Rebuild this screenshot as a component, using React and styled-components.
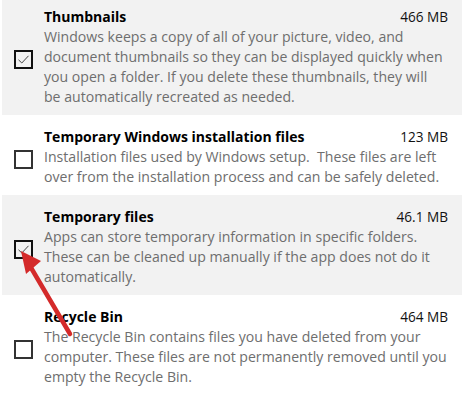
import React from "react";
import styled, { createGlobalStyle } from "styled-components";

const Global = createGlobalStyle`
  html, body { margin: 0; padding: 0; background: #ffffff; }
  body { font-family: "Open Sans", "Noto Sans", sans-serif; overflow: hidden; }
`;

const Page = styled.div`
  position: relative;
  width: 470px;
  height: 395px;
  overflow: hidden;
`;

const List = styled.div`
  margin-top: -5px;
  margin-left: 2px;
  width: 460px;
  display: flex;
  flex-direction: column;
`;

const Row = styled.div`
  display: flex;
  align-items: center;
  background: ${(p) => (p.$shaded ? "#f2f2f2" : "#ffffff")};
  padding: 12px 14px 8px 12px;
`;

const Box = styled.div`
  flex: none;
  width: 15px;
  height: 15px;
  border: 2px solid ${(p) => (p.$checked ? "#111" : "#333")};
  margin-right: 11px;
  margin-top: 4px;
  display: flex;
  align-items: center;
  justify-content: center;
`;

const Body = styled.div`
  flex: 1;
  display: flex;
  flex-direction: column;
`;

const Head = styled.div`
  display: flex;
  justify-content: space-between;
  align-items: baseline;
  height: 20px;
  line-height: 20px;
`;

const Title = styled.span`
  font-weight: 700;
  font-size: 14px;
  color: #000;
`;

const Size = styled.span`
  font-size: 13.6px;
  color: #111;
`;

const Line = styled.div`
  font-size: 14.1px;
  line-height: 20px;
  color: #6e6e6e;
  white-space: pre;
`;

const Arrow = styled.svg`
  position: absolute;
  left: 0;
  top: 0;
  pointer-events: none;
`;

const items = [
  {
    title: "Thumbnails",
    size: "466 MB",
    checked: true,
    shaded: true,
    lines: [
      "Windows keeps a copy of all of your picture, video, and",
      "document thumbnails so they can be displayed quickly when",
      "you open a folder. If you delete these thumbnails, they will",
      "be automatically recreated as needed.",
    ],
  },
  {
    title: "Temporary Windows installation files",
    size: "123 MB",
    checked: false,
    shaded: false,
    lines: [
      "Installation files used by Windows setup.  These files are left",
      "over from the installation process and can be safely deleted.",
    ],
  },
  {
    title: "Temporary files",
    size: "46.1 MB",
    checked: true,
    shaded: true,
    lines: [
      "Apps can store temporary information in specific folders.",
      "These can be cleaned up manually if the app does not do it",
      "automatically.",
    ],
  },
  {
    title: "Recycle Bin",
    size: "464 MB",
    checked: false,
    shaded: false,
    lines: [
      "The Recycle Bin contains files you have deleted from your",
      "computer. These files are not permanently removed until you",
      "empty the Recycle Bin.",
    ],
  },
];

function Check() {
  return (
    <svg width="13" height="13" viewBox="0 0 13 13">
      <path d="M1.5 6.8 L4.8 10 L11.5 2.8" fill="none" stroke="#444" strokeWidth="1" />
    </svg>
  );
}

export default function App() {
  return (
    <Page>
      <Global />
      <List>
        {items.map((it) => (
          <Row key={it.title} $shaded={it.shaded}>
            <Box $checked={it.checked}>{it.checked && <Check />}</Box>
            <Body>
              <Head>
                <Title>{it.title}</Title>
                <Size>{it.size}</Size>
              </Head>
              {it.lines.map((l) => (
                <Line key={l}>{l}</Line>
              ))}
            </Body>
          </Row>
        ))}
      </List>
      <Arrow width="470" height="395" viewBox="0 0 470 395">
        <line x1="70" y1="334" x2="30" y2="266" stroke="#d42a2a" strokeWidth="4.5" strokeLinecap="round" />
        <polygon points="21,251 41,261 26,274" fill="#d42a2a" />
      </Arrow>
    </Page>
  );
}
